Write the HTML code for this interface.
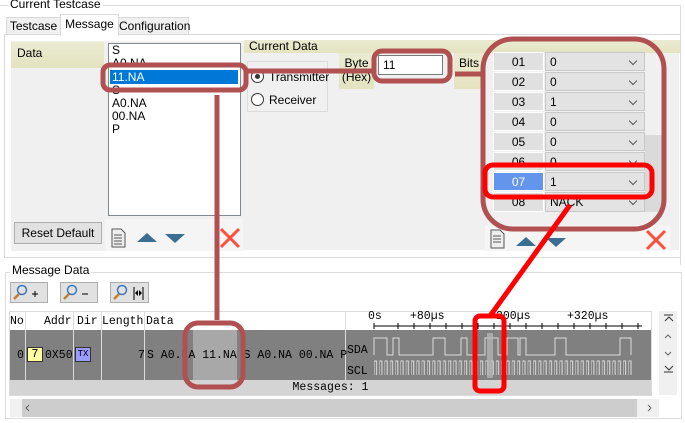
<!DOCTYPE html>
<html><head><meta charset="utf-8"><style>
*{margin:0;padding:0;box-sizing:border-box}
body{width:685px;height:423px;background:#fff;position:relative;overflow:hidden;font-family:"Liberation Sans",sans-serif;font-size:12px;color:#000}
.a{position:absolute}
.mono{font-family:"Liberation Mono",monospace;font-size:11.5px}
.olive{background:linear-gradient(#ebebd2,#e3e3c0)}
.btn{position:absolute;background:#e1e1e1;border:1px solid #adadad}
.cellN{position:absolute;left:493px;width:51px;height:19px;background:#e0e0e0;border:1px solid #fff;text-align:center;line-height:18px}
.cellV{position:absolute;left:545px;width:100px;height:19px;background:#e3e3e3;border:1px solid #c8c8c8;padding-left:4px;line-height:18px}
.cellV:after{content:"";position:absolute;right:8px;top:5px;width:5px;height:5px;border-right:1px solid #555;border-bottom:1px solid #555;transform:rotate(45deg)}
.vl{position:absolute;top:312px;width:1px;height:68px;background:#dcdcdc}
</style></head><body>
<div class="a" style="left:0;top:5px;width:681px;height:1px;background:#dcdcdc"></div>
<div class="a" style="left:680px;top:5px;width:1px;height:260px;background:#dcdcdc"></div>
<div class="a" style="left:8px;top:-3px;background:#fff;padding:0 2px">Current Testcase</div>
<div class="a" style="left:6px;top:17px;width:55px;height:18px;background:#f0f0f0;border:1px solid #d9d9d9;text-align:center;line-height:16px">Testcase</div>
<div class="a" style="left:60px;top:14px;width:59px;height:22px;background:#fff;border:1px solid #d9d9d9;border-bottom:none;text-align:center;line-height:18px;z-index:2">Message</div>
<div class="a" style="left:118px;top:17px;width:71px;height:18px;background:#f0f0f0;border:1px solid #d9d9d9;text-align:center;line-height:16px">Configuration</div>
<div class="a" style="left:4px;top:34px;width:677px;height:224px;background:#fff;border:1px solid #d9d9d9"></div>
<div class="a" style="left:11px;top:41px;width:232px;height:210px;background:#f0f0f0"></div>
<div class="a olive" style="left:11px;top:42px;width:93px;height:26px;padding:4px 6px">Data</div>
<div class="a" style="left:108px;top:43px;width:133px;height:173px;background:#fff;border:1px solid #828790"></div>
<div class="a" style="left:112px;top:44px;line-height:13px">S<br>A0.NA</div>
<div class="a" style="left:110px;top:70px;width:128px;height:14px;background:#0078d7;color:#fff;padding-left:2px;line-height:14px">11.NA</div>
<div class="a" style="left:112px;top:84px;line-height:13px">S<br>A0.NA<br>00.NA<br>P</div>
<div class="btn" style="left:14px;top:222px;width:88px;height:22px;text-align:center;line-height:20px">Reset Default</div>
<div class="a" style="left:105px;top:219px;width:138px;height:32px;background:#f5f5f5"></div>
<svg class="a" style="left:0;top:0" width="685" height="423">
  <path d="M112 229h9l4 4v14h-13z" fill="#eee" stroke="#555"/><path d="M114 235h8M114 238h8M114 241h8M114 244h8" stroke="#555"/>
  <path d="M137 242l10-9 10 9z" fill="#3a6e93"/><path d="M165 234h20l-10 9z" fill="#3a6e93"/>
  <path d="M221 229l18 18M239 229l-18 18" stroke="#ff4d3a" stroke-width="3"/>
</svg>
<div class="a" style="left:243px;top:41px;width:436px;height:209px;background:#f0f0f0"></div>
<div class="a olive" style="left:244px;top:40px;width:436px;height:13px;padding-left:5px;line-height:13px">Current Data</div>
<div class="a" style="left:247px;top:61px;width:81px;height:51px;border:1px solid #dcdcdc"></div>
<div class="a" style="left:251px;top:70px;width:13px;height:13px;border:1px solid #333;border-radius:50%;background:#fff"><div style="margin:3px;width:5px;height:5px;border-radius:50%;background:#333"></div></div>
<div class="a" style="left:269px;top:70px">Transmitter</div>
<div class="a" style="left:251px;top:93px;width:13px;height:13px;border:1px solid #333;border-radius:50%;background:#fff"></div>
<div class="a" style="left:269px;top:93px">Receiver</div>
<div class="a olive" style="left:339px;top:53px;width:35px;height:36px;text-align:center;line-height:14px;padding-top:3px">Byte<br>(Hex)</div>
<div class="a" style="left:378px;top:55px;width:65px;height:20px;background:#fff;border:1px solid #7a7a7a;padding-left:4px;line-height:18px">11</div>
<div class="a olive" style="left:454px;top:53px;width:31px;height:36px;padding-left:5px;padding-top:3px">Bits</div>
<div class="a" style="left:645px;top:135px;width:17px;height:77px;background:#dadada"></div>
<div class="cellN" style="top:52px">01</div><div class="cellV" style="top:52px">0</div>
<div class="cellN" style="top:72px">02</div><div class="cellV" style="top:72px">0</div>
<div class="cellN" style="top:92px">03</div><div class="cellV" style="top:92px">1</div>
<div class="cellN" style="top:112px">04</div><div class="cellV" style="top:112px">0</div>
<div class="cellN" style="top:132px">05</div><div class="cellV" style="top:132px">0</div>
<div class="cellN" style="top:152px">06</div><div class="cellV" style="top:152px">0</div>
<div class="cellN" style="top:172px;background:#6495ed;color:#fff">07</div><div class="cellV" style="top:172px">1</div>
<div class="cellN" style="top:192px;height:20px">08</div><div class="cellV" style="top:192px;height:20px">NACK</div>
<div class="a" style="left:485px;top:225px;width:186px;height:26px;background:#f5f5f5"></div>
<div class="a" style="left:5px;top:272px;width:677px;height:147px;border:1px solid #dcdcdc"></div>
<div class="a" style="left:10px;top:263px;background:#fff;padding:0 2px">Message Data</div>
<div class="btn" style="left:10px;top:282px;width:38px;height:21px"></div>
<div class="btn" style="left:60px;top:282px;width:38px;height:21px"></div>
<div class="btn" style="left:110px;top:282px;width:39px;height:21px"></div>
<div class="a" style="left:9px;top:311px;width:643px;height:85px;border:1px solid #dcdcdc;background:#fff"></div>
<div class="a" style="left:10px;top:330px;width:641px;height:50px;background:#808080"></div>
<div class="vl" style="left:25px"></div><div class="vl" style="left:73px"></div><div class="vl" style="left:101px"></div><div class="vl" style="left:144px"></div><div class="vl" style="left:345px"></div>
<div class="a" style="left:10px;top:380px;width:641px;height:15px;background:#d4d4d4"></div>
<div class="a mono" style="left:10px;top:381px;width:641px;text-align:center">Messages: 1</div>
<div class="a" style="left:193px;top:330px;width:44px;height:50px;background:#a8a8a8"></div>
<div class="a mono" style="left:10px;top:315px">No</div>
<div class="a mono" style="left:44px;top:315px">Addr</div>
<div class="a mono" style="left:77px;top:315px">Dir</div>
<div class="a mono" style="left:102px;top:315px">Length</div>
<div class="a mono" style="left:146px;top:315px">Data</div>
<div class="a mono" style="left:368px;top:310px">0s</div>
<div class="a mono" style="left:410px;top:310px">+80µs</div>
<div class="a mono" style="left:496px;top:310px">200µs</div>
<div class="a mono" style="left:567px;top:310px">+320µs</div>
<div class="a mono" style="left:17px;top:349px">0</div>
<div class="a mono" style="left:27px;top:347px;width:16px;height:15px;background:#ffffa0;border:1px solid #333;text-align:center">7</div>
<div class="a mono" style="left:45px;top:349px">0X50</div>
<div class="a mono" style="left:75px;top:347px;width:16px;height:15px;background:#9a9aff;border:1px solid #333;text-align:center;font-size:9px;line-height:13px">TX</div>
<div class="a mono" style="left:138px;top:349px">7</div>
<div class="a mono" style="left:147px;top:349px;white-space:pre">S A0.NA 11.NA S A0.NA 00.NA P</div>
<div class="a mono" style="left:347px;top:344px">SDA</div>
<div class="a mono" style="left:347px;top:365px">SCL</div>
<div class="a" style="left:659px;top:311px;width:18px;height:84px;background:#f0f0f0"></div>
<div class="a" style="left:10px;top:399px;width:649px;height:18px;background:#f0f0f0"></div>
<div class="a" style="left:22px;top:399px;width:615px;height:18px;background:#cdcdcd"></div>
<svg class="a" style="left:0;top:0" width="685" height="423">
 <defs><pattern id="scl" x="374" y="0" width="5.3" height="30" patternUnits="userSpaceOnUse"><path d="M0 17V1h2.6v16h2.7" fill="none" stroke="#ddd" stroke-width="1"/></pattern></defs>
 <g fill="none" stroke="#3a78c0" stroke-width="1.5"><circle cx="22" cy="290" r="4.5"/><circle cx="72" cy="290" r="4.5"/><circle cx="122" cy="290" r="4.5"/></g>
 <g stroke="#c08030" stroke-width="2.5"><path d="M19 294l-5 5M69 294l-5 5M119 294l-5 5"/></g>
 <path d="M32 294h6M35 291v6M82 294h6M134 287v13M143 287v13" stroke="#000"/><path d="M135 293l3-3v6zM142 293l-3-3v6z"/>
 <path d="M374 326H642" stroke="#000"/>
 <path d="M374 323v6M398 323v6M414 323v6M430 323v6M446 323v6M462 323v6M478 323v6M494 323v6M510 323v6M526 323v6M542 323v6M558 323v6M574 323v6M590 323v6M606 323v6M622 323v6M638 323v6" stroke="#000"/>
 <path d="M374 355V338h13v17h6V338h6v17h34V338h12v17h16V338h6v17h18V338h13v17h9V338h11v17h2V338h6v17h29V338h11v17h54V338h11v17" fill="none" stroke="#ddd"/>
 <rect x="374" y="358" width="258" height="17" fill="url(#scl)"/>
 <rect x="487" y="333" width="6" height="45" fill="#bbb" opacity=".7"/>
 <path d="M664 315h9M665 321l4-4 4 4M664 372h9M665 366l4 4 4-4" stroke="#333" fill="none"/>
 <path d="M665 338l3-3 3 3M665 352l3 3 3-3M29 405l-3 3 3 3M648 405l3 3-3 3" stroke="#666" fill="none"/>
 <path d="M491 230h9l4 4v14h-13z" fill="#eee" stroke="#555"/><path d="M493 236h8M493 239h8M493 242h8" stroke="#555"/>
 <path d="M516 246l10-9 10 9z" fill="#3a6e93"/><path d="M546 238h20l-10 9z" fill="#3a6e93"/>
 <path d="M647 231l18 18M665 231l-18 18" stroke="#ff4d3a" stroke-width="3"/>
 <g fill="none" stroke="#b05050" stroke-width="5">
  <rect x="103" y="65" width="143" height="25" rx="7"/>
  <path d="M247 71H375M455 74H482M217 95V320"/>
  <rect x="374" y="51" width="76" height="30" rx="8"/>
  <rect x="483" y="39" width="181" height="190" rx="30"/>
  <rect x="185" y="323" width="58" height="64" rx="13"/>
 </g>
 <g fill="none" stroke="#ff0000" stroke-width="5">
  <rect x="485" y="165" width="167" height="32" rx="8"/>
  <path d="M570 205L490 316"/>
  <rect x="475" y="316" width="29" height="75" rx="5"/>
 </g>
</svg>
</body></html>
